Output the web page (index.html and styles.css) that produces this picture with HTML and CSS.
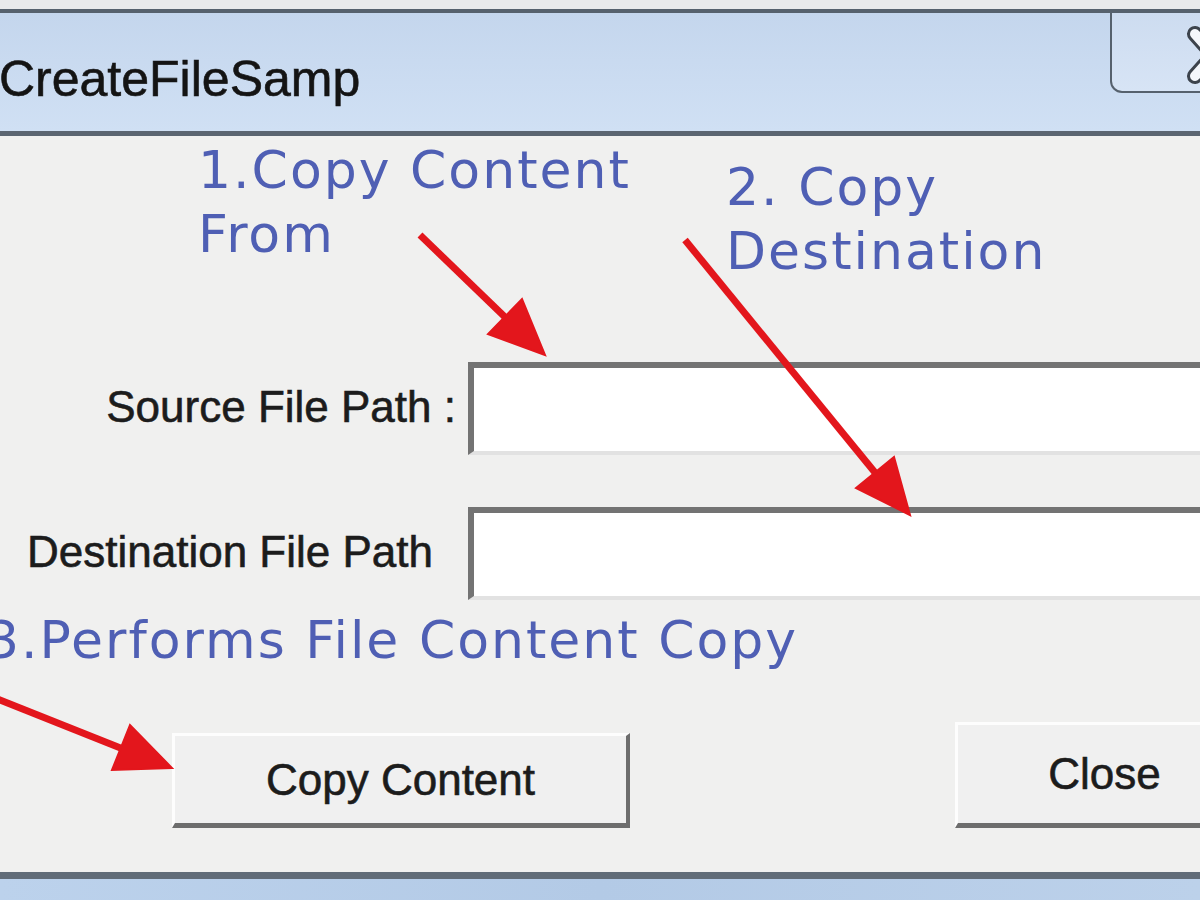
FILE: index.html
```html
<!DOCTYPE html>
<html lang="en">
  <head>
    <meta charset="UTF-8" />
    <meta name="viewport" content="width=device-width, initial-scale=1.0" />
    <title>CreateFileSamp</title>
    <link rel="stylesheet" href="styles.css">
  </head>
  <body>
    <div class="window">
      <div class="frame-top"></div>

      <!-- Title bar -->
      <div class="titlebar">
        <span class="title">CreateFileSamp</span>
        <button class="close-x" aria-label="Close">
          <svg width="70" height="70" viewBox="0 0 70 70">
            <path d="M9 9 L47 51 M47 9 L9 51" stroke="#3c434c" stroke-width="16" stroke-linecap="round" fill="none" />
            <path d="M9 9 L47 51 M47 9 L9 51" stroke="#f4f7fb" stroke-width="10" stroke-linecap="round" fill="none" />
          </svg>
        </button>
      </div>

      <!-- Form area -->
      <div class="client">
        <div class="notes">
          <p class="note">1.Copy Content<br />From</p>
          <p class="note note-2">2. Copy<br />Destination</p>
        </div>

        <div class="form">
          <label class="field-label label-src" for="srcPath">Source File Path :</label>
          <input class="field" id="srcPath" type="text" />
          <label class="field-label label-dst" for="dstPath">Destination File Path</label>
          <input class="field" id="dstPath" type="text" />
        </div>

        <p class="note note-3">3.Performs File Content Copy</p>

        <div class="actions">
          <button class="btn btn-copy">Copy Content</button>
          <button class="btn btn-close">Close</button>
        </div>
      </div>

      <div class="frame-bottom"></div>

      <!-- Red annotation arrows -->
      <svg class="arrows" width="1200" height="900" viewBox="0 0 1200 900">
        <g fill="#e3161c" stroke="#e3161c">
          <line x1="420" y1="235" x2="507" y2="319" stroke-width="7" />
          <polygon points="545,355 488,334 522,299" stroke-width="2" />

          <line x1="685" y1="240" x2="877" y2="475" stroke-width="7" />
          <polygon points="910,515 856,488 894,457" stroke-width="2" />

          <line x1="-5" y1="698" x2="123" y2="749" stroke-width="7" />
          <polygon points="172,768 112,770 130,725" stroke-width="2" />
        </g>
      </svg>
    </div>
  </body>
</html>
```

FILE: styles.css
```css
/* Reset */
* {
  margin: 0;
  padding: 0;
  box-sizing: border-box;
}

body {
  font-family: "Liberation Sans", Arial, sans-serif;
  background-color: #f0f0f0;
  color: #1c1c1c;
  overflow: hidden;
}

.window {
  position: relative;
  width: 1200px;
  height: 900px;
  overflow: hidden;
}

.frame-top {
  height: 9px;
  background-color: #e9eaeb;
}

/* Title bar */
.titlebar {
  display: flex;
  align-items: flex-start;
  height: 127px;
  border-top: 4px solid #56616d;
  border-bottom: 5px solid #5b6571;
  background: linear-gradient(to bottom, #c4d6ed, #d0e0f4);
  overflow: hidden;
}

.title {
  flex: 1 1 auto;
  min-width: 0;
  margin-top: 36px;
  margin-left: -1px;
  font-size: 50px;
  line-height: 60px;
  color: #141414;
  white-space: nowrap;
  -webkit-text-stroke: 0.6px #141414;
}

.close-x {
  flex-shrink: 0;
  width: 160px;
  height: 80px;
  margin-right: -70px;
  padding: 12px 0 0 74px;
  text-align: left;
  border: 2px solid #56616d;
  border-top: none;
  border-radius: 0 0 0 12px;
  background: linear-gradient(to bottom, #cddcf0, #d7e4f5);
}

.close-x svg {
  display: block;
}

/* Client area */
.client {
  height: 736px;
  padding-top: 2px;
  background-color: #f0f0ef;
}

.notes {
  display: grid;
  grid-template-columns: 528px auto;
  padding-left: 198px;
}

.note {
  font-family: "DejaVu Sans", Verdana, sans-serif;
  font-size: 52px;
  line-height: 64px;
  letter-spacing: 2px;
  color: #4f5fb4;
  white-space: nowrap;
}

.note-2 {
  margin-top: 17px;
}

.form {
  display: grid;
  grid-template-columns: 468px 780px;
  grid-template-rows: 93px 93px;
  row-gap: 52px;
  align-items: center;
  margin-top: 79px;
}

.field-label {
  font-size: 44px;
  white-space: nowrap;
  margin-top: -4px;
  -webkit-text-stroke: 0.6px #1c1c1c;
}

.label-src {
  text-align: right;
  padding-right: 12px;
}

.label-dst {
  padding-left: 27px;
}

.field {
  width: 100%;
  height: 93px;
  border-top: 6px solid #737373;
  border-left: 6px solid #737373;
  border-bottom: 4px solid #e2e2e2;
  border-right: 4px solid #e2e2e2;
  background-color: #fff;
  outline: none;
}

.note-3 {
  margin-top: 8px;
  margin-left: -14px;
}

.actions {
  display: flex;
  align-items: flex-end;
  margin-top: 50px;
}

.btn {
  flex-shrink: 0;
  font-family: "Liberation Sans", Arial, sans-serif;
  font-size: 44px;
  color: #1c1c1c;
  background-color: #f0f0f0;
  border-top: 3px solid #fdfdfd;
  border-left: 3px solid #fdfdfd;
  border-bottom: 5px solid #6d6d6d;
  border-right: 4px solid #6d6d6d;
  -webkit-text-stroke: 0.6px #1c1c1c;
}

.btn-copy {
  width: 458px;
  height: 95px;
  margin-left: 172px;
}

.btn-close {
  width: 300px;
  height: 106px;
  margin-left: 325px;
}

.frame-bottom {
  height: 28px;
  border-top: 7px solid #616c78;
  background: linear-gradient(to right, #bcd2ec, #b3cae6 50%, #bcd1ea);
}

/* Annotation overlay */
.arrows {
  position: absolute;
  top: 0;
  left: 0;
  pointer-events: none;
}
```
